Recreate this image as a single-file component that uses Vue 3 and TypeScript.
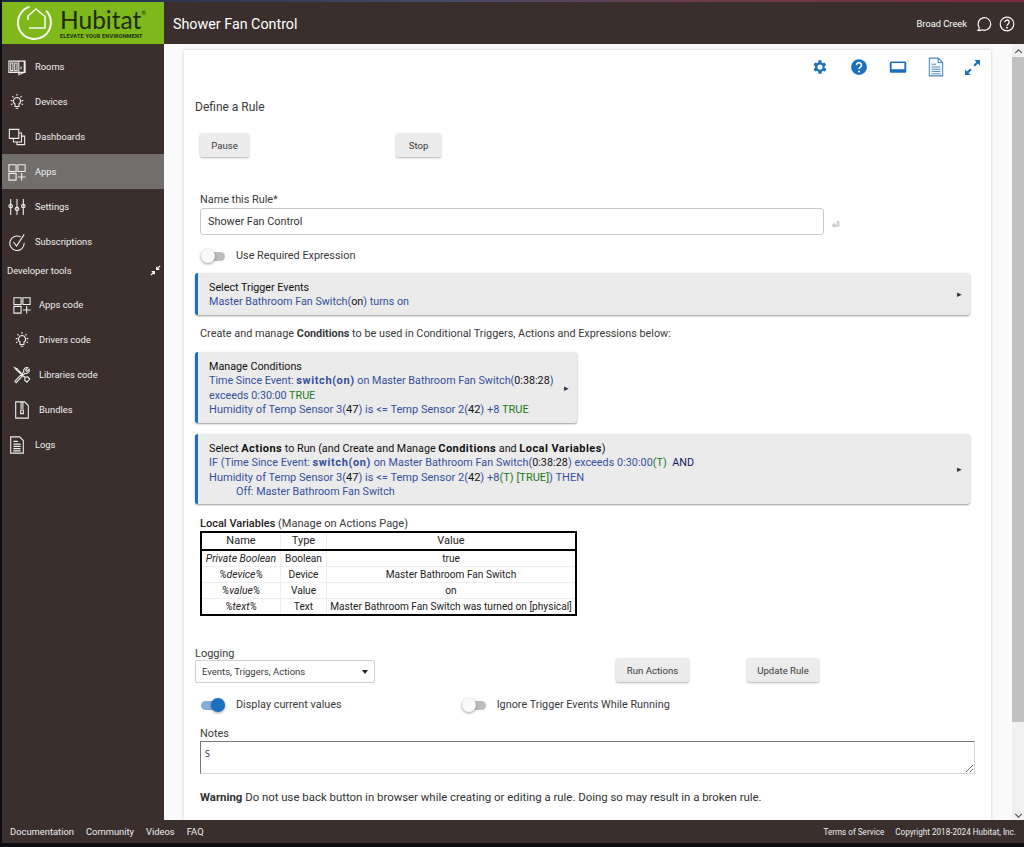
<template>
  <div class="page">
    <div class="top-strip"></div>
    <header class="topbar">
      <div class="logo">
        <svg class="logo-mark" viewBox="0 0 36 36" width="36" height="36">
          <path d="M12.500 1.800A16.500 16.500 0 1 0 29 5.800" fill="none" stroke="#f4f8e8" stroke-width="2" />
          <path d="M11 15v-4l8-7 9 7.500V23H12" fill="none" stroke="#f4f8e8" stroke-width="1.600" />
        </svg>
        <div class="logo-text">
          <div class="logo-name">Hubitat<sup>®</sup></div>
          <div class="logo-tag">ELEVATE YOUR ENVIRONMENT</div>
        </div>
      </div>
      <div class="page-title">Shower Fan Control</div>
      <div class="top-right">
        <span class="hub-name">Broad Creek</span>
        <svg viewBox="0 0 16 16" width="16" height="16" class="top-icon">
          <path d="M2 14.500c1-1 1.300-2 1.200-3A6.300 6.300 0 1 1 6 13.800c-1.300.7-2.600.9-4 .7z" fill="none" stroke="#fff" stroke-width="1.200" />
        </svg>
        <svg viewBox="0 0 16 16" width="16" height="16" class="top-icon">
          <circle cx="8" cy="8" r="6.800" fill="none" stroke="#fff" stroke-width="1.200" />
          <path d="M5.800 6.300A2.200 2.200 0 1 1 9 8.200c-.7.400-1 .8-1 1.600" fill="none" stroke="#fff" stroke-width="1.300" />
          <circle cx="8" cy="11.700" r=".9" fill="#fff" />
        </svg>
      </div>
    </header>

    <div class="middle">
      <aside class="sidebar">
        <a v-for="item in mainNav" :key="item.label" class="nav-item" :class="{ active: item.label === 'Apps' }">
          <svg viewBox="0 0 20 20" class="nav-icon">
            <path :d="item.d" fill="none" stroke="#eee" stroke-width="1.200" />
          </svg>
          <span>{{ item.label }}</span>
        </a>
        <div class="dev-head">
          <span>Developer tools</span>
          <svg viewBox="0 0 12 12" width="11" height="11">
            <path d="M1 11 4.500 7.500M1.800 7.300h2.900v2.900M11 1 7.500 4.500M7.300 1.800v2.900h2.900" fill="none" stroke="#fff" stroke-width="1.300" />
          </svg>
        </div>
        <a v-for="item in devNav" :key="item.label" class="nav-item" :class="{ sub: item.sub }">
          <svg viewBox="0 0 20 20" class="nav-icon">
            <path :d="item.d" fill="none" stroke="#eee" stroke-width="1.200" />
          </svg>
          <span>{{ item.label }}</span>
        </a>
      </aside>

      <main class="content">
        <section class="card">
          <div class="card-tools">
            <svg viewBox="0 0 24 24" width="18" height="18">
              <path fill="#1a6fc0" d="M19.400 13a7.500 7.500 0 0 0 0-2l2.100-1.600-2-3.500-2.500 1a7.500 7.500 0 0 0-1.700-1L15.400 3h-4l-.4 2.900a7.500 7.500 0 0 0-1.700 1l-2.500-1-2 3.500L6.900 11a7.500 7.500 0 0 0 0 2l-2.100 1.600 2 3.500 2.500-1a7.500 7.500 0 0 0 1.700 1l.4 2.900h4l.4-2.900a7.500 7.500 0 0 0 1.700-1l2.500 1 2-3.500zM13.400 15.500a3.500 3.500 0 1 1 0-7 3.500 3.500 0 0 1 0 7z" transform="translate(-1.400)" />
            </svg>
            <svg viewBox="0 0 24 24" width="18" height="18">
              <circle cx="12" cy="12" r="10.500" fill="#1a6fc0" />
              <path d="M8.700 9.500a3.300 3.300 0 1 1 5 2.800c-1 .6-1.700 1.200-1.700 2.400" fill="none" stroke="#fff" stroke-width="2.200" />
              <circle cx="12" cy="18" r="1.400" fill="#fff" />
            </svg>
            <svg viewBox="0 0 24 24" width="18" height="18">
              <path fill="#1a6fc0" d="M3 4.500h18a2 2 0 0 1 2 2v11a2 2 0 0 1-2 2H3a2 2 0 0 1-2-2v-11a2 2 0 0 1 2-2zm.500 2v8.500h17V6.500z" />
            </svg>
            <svg viewBox="0 0 18 22" width="16" height="20">
              <path d="M1.500 1h10l5 5v15h-15zM11.500 1v5h5" fill="#f4f8fc" stroke="#4a86c0" stroke-width="1.200" />
              <path d="M4 8h5M4 11h10M4 13.500h10M4 16h10M4 18.500h10" stroke="#5a8fc4" stroke-width="1.200" />
            </svg>
            <svg viewBox="0 0 16 16" width="15" height="15">
              <path fill="#1a6fc0" d="M16 0v6l-2.200-2.200-3.200 3.200-1.600-1.600 3.200-3.200L10 0zM0 16v-6l2.200 2.200 3.200-3.200 1.600 1.600-3.200 3.200L6 16z" />
            </svg>
          </div>

          <h2 class="rule-title">Define a Rule</h2>

          <div class="top-buttons">
            <button class="btn pause">Pause</button>
            <button class="btn stop">Stop</button>
          </div>

          <label class="field-label name-label">Name this Rule*</label>
          <div class="name-row">
            <input class="name-input" value="Shower Fan Control" />
            <span class="return-mark">⏎</span>
          </div>

          <div class="toggle-row first-toggle">
            <span class="toggle"></span>
            <span>Use Required Expression</span>
          </div>

          <div class="panel trigger">
            <div class="panel-title">Select Trigger Events</div>
            <div class="blue">Master Bathroom Fan Switch(<span class="dark">on</span>) turns on</div>
            <span class="caret">▸</span>
          </div>

          <p class="hint">Create and manage <b>Conditions</b> to be used in Conditional Triggers, Actions and Expressions below:</p>

          <div class="panel conditions">
            <div class="panel-title">Manage Conditions</div>
            <div class="blue">Time Since Event: <b>switch(on)</b> on Master Bathroom Fan Switch(<span class="dark">0:38:28</span>)</div>
            <div class="blue">exceeds 0:30:00 <span class="green">TRUE</span></div>
            <div class="blue wide">Humidity of Temp Sensor 3(<span class="dark">47</span>) is &lt;= Temp Sensor 2(<span class="dark">42</span>) +8 <span class="green">TRUE</span></div>
            <span class="caret">▸</span>
          </div>

          <div class="panel actions">
            <div class="panel-title">Select <b>Actions</b> to Run (and Create and Manage <b>Conditions</b> and <b>Local Variables</b>)</div>
            <div class="blue spaced">IF (Time Since Event: <b>switch(on)</b> on Master Bathroom Fan Switch(<span class="dark">0:38:28</span>) exceeds 0:30:00<span class="green">(T)</span> &nbsp;<span class="navy">AND</span></div>
            <div class="blue wide">Humidity of Temp Sensor 3(<span class="dark">47</span>) is &lt;= Temp Sensor 2(<span class="dark">42</span>) +8<span class="green">(T) [TRUE]</span>) THEN</div>
            <div class="blue indent">Off: Master Bathroom Fan Switch</div>
            <span class="caret">▸</span>
          </div>

          <div class="vars-title"><b>Local Variables</b> (Manage on Actions Page)</div>
          <table class="vars">
            <thead>
              <tr><th class="c-name">Name</th><th class="c-type">Type</th><th>Value</th></tr>
            </thead>
            <tbody>
              <tr v-for="row in localVars" :key="row.name">
                <td><i>{{ row.name }}</i></td>
                <td>{{ row.type }}</td>
                <td>{{ row.value }}</td>
              </tr>
            </tbody>
          </table>

          <label class="field-label logging-label">Logging</label>
          <div class="logging-row">
            <div class="select">
              <span>Events, Triggers, Actions</span>
              <span class="select-arrow"></span>
            </div>
            <button class="btn run">Run Actions</button>
            <button class="btn update">Update Rule</button>
          </div>

          <div class="switches">
            <div class="toggle-row">
              <span class="toggle on"></span>
              <span>Display current values</span>
            </div>
            <div class="toggle-row second">
              <span class="toggle"></span>
              <span>Ignore Trigger Events While Running</span>
            </div>
          </div>

          <label class="field-label notes-label">Notes</label>
          <textarea class="notes">S</textarea>

          <p class="warning"><b>Warning</b> Do not use back button in browser while creating or editing a rule. Doing so may result in a broken rule.</p>
        </section>

        <div class="scrollbar">
          <svg viewBox="0 0 10 6" width="9" height="5"><path d="M1 5l4-4 4 4" fill="none" stroke="#555" stroke-width="1.400" /></svg>
          <div class="thumb"></div>
          <svg viewBox="0 0 10 6" width="9" height="5"><path d="M1 1l4 4 4-4" fill="none" stroke="#555" stroke-width="1.400" /></svg>
        </div>
      </main>
    </div>

    <footer class="footer">
      <div class="foot-links">
        <a>Documentation</a><a>Community</a><a>Videos</a><a>FAQ</a>
      </div>
      <div class="foot-right">
        <a>Terms of Service</a><span>Copyright 2018-2024 Hubitat, Inc.</span>
      </div>
    </footer>
  </div>
</template>

<script setup lang="ts">
interface NavItem {
  label: string
  d: string
  sub?: boolean
}

const bulb = 'M10 5a4 4 0 0 0-2.200 7.300V15h4.400v-2.700A4 4 0 0 0 10 5zM8.500 17h3M10 1v2M3 8.500h2M15 8.500h2M4.800 3.500l1.400 1.400M15.200 3.500l-1.400 1.400M3.500 13l1.400-1M16.500 13l-1.400-1'
const grid = 'M1 2h8v7.500H1zM11 2h8v7.500h-8zM1 11.500h8V19H1zM11 15.500h8.500M15.200 11v8.500'

const mainNav: NavItem[] = [
  { label: 'Rooms', d: 'M1 3.500h18v12.500H1zM3 5.500h2.500v8.500H3zM7.500 5.500H10v8.500H7.500zM12 3.500v15l6-2.500V3.500M14.500 9.500v3' },
  { label: 'Devices', d: bulb },
  { label: 'Dashboards', d: 'M1.500 1.500h10.500v10H1.500zM6 11.500v4h9V5.500h-3M10 15.500v3h8.500V9H15' },
  { label: 'Apps', d: grid },
  { label: 'Settings', d: 'M3 1v6M3 11v8M10 1v9M10 14v5M17 1v6M17 11v8M3 7a2 2 0 1 0 .01 4zM3 7a2 2 0 1 1-.01 4M10 10a2 2 0 1 0 .01 4zM10 10a2 2 0 1 1-.01 4M17 7a2 2 0 1 0 .01 4zM17 7a2 2 0 1 1-.01 4' },
  { label: 'Subscriptions', d: 'M14 4.500A8 8 0 1 0 18 11M6 10l3.500 4.500L18 1.500' },
]

const devNav: NavItem[] = [
  { label: 'Apps code', d: grid, sub: true },
  { label: 'Drivers code', d: bulb, sub: true },
  { label: 'Libraries code', d: 'M2 17 12 6.500A3.500 3.500 0 0 1 16.500 2L14 4.500l1.500 1.500L18 3.500A3.500 3.500 0 0 1 13.500 8L3.500 18.500zM2 2l2.500 1 9 9.500 3-.5 2 2.500-3 3.500-2.500-2 .5-3L4 4.500z', sub: true },
  { label: 'Bundles', d: 'M3 1h10l4 4v14H3zM9 1v8M11 1v8M8.500 10h3v4h-3z', sub: true },
  { label: 'Logs', d: 'M3 1h10l4 4v14H3zM6 6h5M6 9h8M6 11.500h8M6 14h8M6 16.500h8' },
]

const localVars = [
  { name: 'Private Boolean', type: 'Boolean', value: 'true' },
  { name: '%device%', type: 'Device', value: 'Master Bathroom Fan Switch' },
  { name: '%value%', type: 'Value', value: 'on' },
  { name: '%text%', type: 'Text', value: 'Master Bathroom Fan Switch was turned on [physical]' },
]
</script>

<style>
html,
body {
  margin: 0;
  background: #000;
}
</style>

<style scoped>
.page {
  width: 1024px;
  height: 847px;
  overflow: hidden;
  display: flex;
  flex-direction: column;
  box-sizing: border-box;
  padding: 0 0 4px 2px;
  background: #0b0d12;
  font-family: Roboto, "Liberation Sans", sans-serif;
  font-size: 10.850px;
  color: #3a3a3a;
}

.top-strip {
  height: 2px;
  flex: none;
  background: linear-gradient(90deg, #1a2a44 0%, #4a4a6a 45%, #6e3a48 70%, #7a2a40 100%);
}

.topbar {
  height: 42px;
  flex: none;
  display: flex;
  align-items: center;
  background: #3a2f2d;
  color: #fff;
}

.logo {
  width: 162px;
  height: 100%;
  flex: none;
  display: flex;
  align-items: center;
  gap: 7px;
  box-sizing: border-box;
  padding-left: 15px;
  background: #7eb81a;
}

.logo-mark {
  flex: none;
}

.logo-text {
  color: #1f2a15;
}

.logo-name {
  font-family: Lato, Roboto, sans-serif;
  font-size: 24.500px;
  line-height: 26px;
  white-space: nowrap;
}

.logo-name sup {
  font-size: 6px;
  line-height: 0;
  vertical-align: 14px;
}

.logo-tag {
  font-size: 5.500px;
  line-height: 6px;
  font-weight: 700;
  letter-spacing: 0.2px;
  white-space: nowrap;
}

.page-title {
  margin-left: 9px;
  padding-top: 2px;
  font-size: 14.300px;
}

.top-right {
  margin-left: auto;
  padding: 1px 9px 0 0;
  display: flex;
  align-items: center;
  font-size: 9.300px;
}

.top-icon {
  margin-left: 7px;
}

.hub-name {
  margin-right: 2px;
}

.middle {
  flex: 1;
  min-height: 0;
  display: flex;
}

.sidebar {
  width: 162px;
  flex: none;
  background: #3a2f2d;
  color: #f0f0f0;
  padding-top: 5px;
  font-size: 9.350px;
}

.nav-item {
  height: 35px;
  display: flex;
  align-items: center;
  gap: 9px;
  padding-left: 6px;
}

.nav-item.sub {
  padding-left: 11px;
  gap: 8px;
}

.nav-item.active {
  background: #726e6c;
}

.nav-icon {
  width: 18px;
  height: 18px;
  flex: none;
}

.dev-head {
  height: 22px;
  padding: 0 3px 6px 5px;
  display: flex;
  align-items: center;
  justify-content: space-between;
}

.content {
  flex: 1;
  min-width: 0;
  display: flex;
  background: #fafafa;
  padding-left: 20px;
}

.card {
  width: 807px;
  height: 770px;
  margin-top: 6px;
  flex: none;
  box-sizing: border-box;
  padding: 0 21px 0 11px;
  background: #fff;
  box-shadow: 0 0 3px rgba(0, 0, 0, 0.18);
}

.card-tools {
  height: 34px;
  display: flex;
  align-items: center;
  justify-content: flex-end;
  gap: 21px;
  margin-right: -10px;
}

.rule-title {
  margin: 14px 0 0;
  font-size: 12px;
  font-weight: 400;
  line-height: 18px;
}

.top-buttons {
  margin: 17px 0 0 5px;
  display: flex;
}

.btn {
  height: 24px;
  padding: 0;
  border: 0;
  border-radius: 2px;
  background: #ececec;
  color: #3a3a3a;
  font: inherit;
  font-size: 9.600px;
  box-shadow: 0 1px 2px rgba(0, 0, 0, 0.3);
}

.pause {
  width: 49px;
}

.stop {
  width: 45px;
  margin-left: 147px;
}

.field-label {
  display: block;
  line-height: 12px;
}

.name-label {
  margin: 37px 0 2px 5px;
}

.name-row {
  display: flex;
  align-items: center;
  margin-left: 5px;
}

.name-input {
  width: 624px;
  height: 27px;
  box-sizing: border-box;
  padding: 0 7px;
  border: 1px solid #c9c9c9;
  border-radius: 3px;
  color: #333;
  font: inherit;
}

.return-mark {
  margin: 6px 0 0 8px;
  font-size: 9px;
  color: #777;
}

.toggle-row {
  display: flex;
  align-items: center;
  gap: 11px;
  line-height: 16px;
}

.first-toggle {
  margin: 13px 0 0 6px;
}

.toggle {
  position: relative;
  width: 24px;
  height: 9px;
  border-radius: 5px;
  background: #bdbdbd;
}

.toggle::after {
  content: "";
  position: absolute;
  left: 0;
  top: -3px;
  width: 14px;
  height: 14px;
  border-radius: 50%;
  background: #fafafa;
  box-shadow: 0 1px 3px rgba(0, 0, 0, 0.4);
}

.toggle.on {
  background: #85aedb;
}

.toggle.on::after {
  left: auto;
  right: 0;
  background: #1a6fc0;
}

.panel {
  position: relative;
  box-sizing: border-box;
  margin-top: 9px;
  padding: 8px 14px 0 11px;
  border-left: 3px solid #1a6fc0;
  border-radius: 3px;
  background: #ebebeb;
  box-shadow: 0 1px 2px rgba(0, 0, 0, 0.4);
  line-height: 14.400px;
  color: #111;
  font-size: 10.750px;
}

/* bold runs are wider than Roboto here, same height */
.panel b {
  font-size: 11px;
  letter-spacing: 0.45px;
  line-height: 1;
}

.panel .blue b {
  letter-spacing: 0.6px;
}

.panel-title {
  color: #111;
}

.trigger {
  width: 775px;
  height: 42px;
}

.conditions {
  width: 382px;
  height: 71px;
  margin-top: 11px;
}

.actions {
  width: 775px;
  height: 70px;
  margin-top: 11px;
}

.blue {
  color: #34509f;
}

.blue.wide {
  font-size: 11.050px;
}

.blue.spaced {
  letter-spacing: 0.05px;
}

.dark {
  color: #111;
}

.green {
  color: #1b7a1b;
}

.navy {
  color: #101a66;
}

.indent {
  padding-left: 27px;
}

.caret {
  position: absolute;
  right: 8px;
  top: 50%;
  transform: translateY(-50%);
  font-size: 9px;
  color: #333;
}

.hint {
  margin: 12px 0 0 5px;
  line-height: 14px;
}

.vars-title {
  margin: 13px 0 0 5px;
  line-height: 13px;
  font-size: 11px;
}

.vars-title b {
  font-weight: 500;
  color: #222;
}

.vars {
  margin: 1px 0 0 5px;
  width: 377px;
  height: 83px;
  box-sizing: border-box;
  border: 2px solid #000;
  border-collapse: collapse;
  font-size: 10.150px;
  line-height: 12px;
  color: #222;
  text-align: center;
  table-layout: fixed;
}

.vars th {
  height: 16px;
  padding: 0;
  font-size: 11px;
  font-weight: 400;
  border-bottom: 2px solid #000;
  border-left: 1px solid #eee;
}

.vars td {
  height: 15px;
  padding: 0;
  border-bottom: 1px solid #eee;
  border-left: 1px solid #eee;
  white-space: nowrap;
}

.vars i {
  font-size: 10.400px;
}

.c-name {
  width: 78px;
}

.c-type {
  width: 45px;
}

.logging-label {
  margin: 32px 0 0;
  font-size: 11px;
}

.logging-row {
  display: flex;
  align-items: flex-start;
}

.select {
  width: 180px;
  height: 23px;
  box-sizing: border-box;
  display: flex;
  align-items: center;
  justify-content: space-between;
  padding: 0 6px;
  border: 1px solid #d0d0d0;
  border-radius: 2px;
  font-size: 9.500px;
  box-shadow: 0 0 1px rgba(0, 0, 0, 0.1);
}

.select-arrow {
  width: 0;
  height: 0;
  border: 3.500px solid transparent;
  border-top: 4px solid #222;
  border-bottom: 0;
}

.run {
  width: 73px;
  margin: -2px 0 0 241px;
}

.update {
  width: 72px;
  margin: -2px 0 0 58px;
}

.switches {
  margin: 14px 0 0 6px;
  display: flex;
}

.second {
  margin-left: 120px;
}

.notes-label {
  margin: 15px 0 1px 5px;
}

.notes {
  display: block;
  margin-left: 5px;
  width: 775px;
  height: 33px;
  box-sizing: border-box;
  padding: 5px 4px;
  border: 1px solid #d8d8d8;
  border-top: 1px solid #777;
  border-left: 1px solid #777;
  font-family: "Noto Sans", sans-serif;
  font-size: 9px;
  color: #333;
  outline: none;
}

.warning {
  margin: 16px 0 0 5px;
  line-height: 14px;
  font-size: 11.400px;
  color: #333;
}

.warning b {
  font-weight: 700;
}

.scrollbar {
  margin-left: auto;
  width: 12px;
  flex: none;
  display: flex;
  flex-direction: column;
  align-items: center;
  background: #f1f1f1;
  padding: 5px 0 2px;
  box-sizing: border-box;
}

.thumb {
  width: 100%;
  height: 665px;
  margin: 3px 0 auto;
  background: #c1c1c1;
}

.footer {
  height: 23px;
  flex: none;
  display: flex;
  align-items: center;
  justify-content: space-between;
  padding: 0 8px;
  background: #3a2f2d;
  color: #eee;
}

.foot-links {
  display: flex;
  gap: 12px;
  font-size: 9.400px;
}

.foot-right {
  display: flex;
  gap: 11px;
  font-size: 8.150px;
}
</style>
